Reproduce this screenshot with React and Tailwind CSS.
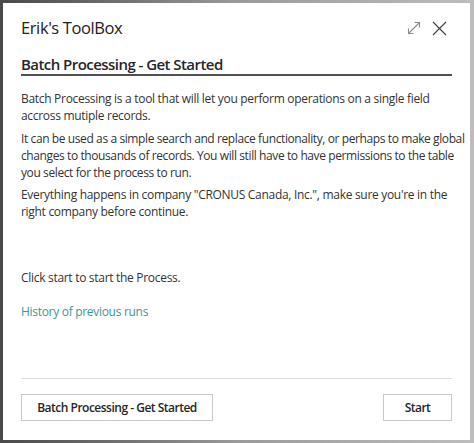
export default function App() {
    return (
        <div className="w-[474px] h-[443px] bg-gradient-to-r from-[#4a4a4a] via-[#9a9a9a] to-[#bdbdbd] pt-[3px] pl-[3px] pr-[4px] pb-[3px]" style={{ fontFamily: '"Open Sans", "Noto Sans", sans-serif' }}>
            <div className="h-full bg-white flex flex-col px-[18px]">
                {/* header */}
                <div className="flex items-center justify-between h-[50px]">
                    <h1 className="text-[16.5px] tracking-[-0.4px] text-[#212121] leading-none">Erik's ToolBox</h1>
                    <div className="flex items-center gap-[11px] pr-[5px]">
                        <svg width="14" height="14" viewBox="0 0 14 14" fill="none" stroke="#8a8a8a" strokeWidth="1.1">
                            <path d="M1.5 12.5 L12.5 1.5" />
                            <path d="M7.5 1.5 H12.5 V6.5" />
                            <path d="M1.5 7.5 V12.5 H6.5" />
                        </svg>
                        <svg width="15" height="15" viewBox="0 0 15 15" fill="none" stroke="#444444" strokeWidth="1.2">
                            <path d="M1 1 L14 14 M14 1 L1 14" />
                        </svg>
                    </div>
                </div>

                <div className="mt-[1px] border-b-2 border-[#505050]">
                    <h2 className="text-[15px] font-semibold tracking-[-0.55px] text-[#262626] leading-[20px]">Batch Processing - Get Started</h2>
                </div>

                {/* body */}
                <div className="text-[12px] tracking-[-0.3px] leading-[17px] text-[#333333] pt-[14px] flex-1">
                    <p>Batch Processing is a tool that will let you perform operations on a single field accross mutiple records.</p>
                    <p className="mt-[6px] tracking-[-0.4px] whitespace-nowrap">
                        It can be used as a simple search and replace functionality, or perhaps to make global<br />
                        changes to thousands of records. You will still have to have permissions to the table<br />
                        you select for the process to run.
                    </p>
                    <p className="mt-[5px]">Everything happens in company "CRONUS Canada, Inc.", make sure you're in the right company before continue.</p>
                    <p className="mt-[49px]">Click start to start the Process.</p>
                    <a className="block mt-[17px] text-[#3b9696]" href="#">History of previous runs</a>
                </div>

                {/* footer */}
                <div className="border-t border-[#dcdcdc] pt-[15px] pb-[19px] flex justify-between">
                    <button className="h-[27px] w-[192px] border border-[#c8c8c8] text-[12px] font-semibold tracking-[-0.5px] text-[#262626]">Batch Processing - Get Started</button>
                    <button className="h-[27px] w-[69px] border border-[#c8c8c8] text-[12px] font-semibold tracking-[-0.5px] text-[#262626]">Start</button>
                </div>
            </div>
        </div>
    );
}
